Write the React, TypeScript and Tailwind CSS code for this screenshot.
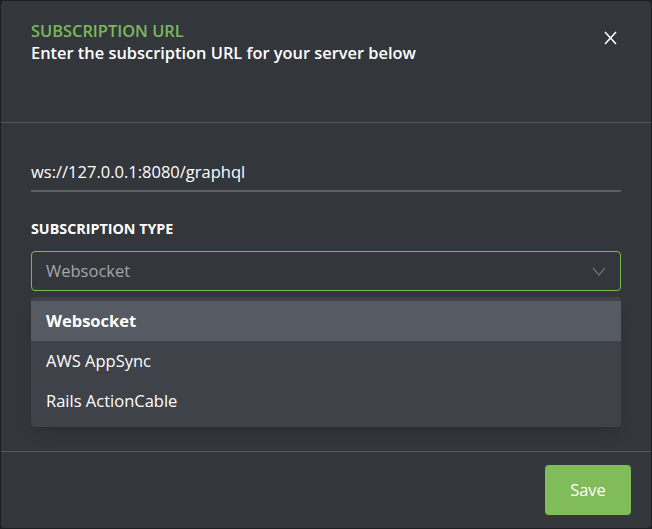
import { useState } from 'react';

const options = ['Websocket', 'AWS AppSync', 'Rails ActionCable'];

export default function App() {
  const [url, setUrl] = useState('ws://127.0.0.1:8080/graphql');
  const [selected] = useState('Websocket');

  return (
    <div
      className="w-[652px] h-[529px] bg-[#1d1f22] p-px"
      style={{ fontFamily: '"Open Sans", sans-serif' }}
    >
      <div className="h-full bg-[#33363b] rounded-[4px] flex flex-col">
        {/* header */}
        <div className="h-[122px] border-b border-[#55585d] px-[30px] pt-[19px] flex justify-between">
          <div>
            <div className="text-[#7ab95a] text-[16.4px] font-semibold leading-[22px]">SUBSCRIPTION URL</div>
            <div className="text-white text-[16.4px] font-semibold leading-[22px]">
              Enter the subscription URL for your server below
            </div>
          </div>
          <button className="text-white mt-[11px] mr-[4px] h-[14px]">
            <svg width="13" height="14" viewBox="0 0 13 14" fill="none" stroke="currentColor" strokeWidth="1.6">
              <path d="M1 1 L12 13 M12 1 L1 13" />
            </svg>
          </button>
        </div>

        {/* body */}
        <div className="flex-1 px-[30px] pt-[37px] border-b border-[#55585d]">
          <input
            value={url}
            onChange={(e) => setUrl(e.target.value)}
            className="w-full bg-transparent text-white text-[16.5px] pb-[5px] outline-none border-b-2 border-[#5b5e63]"
          />
          <div className="mt-[26px] text-white text-[14.3px] font-bold">SUBSCRIPTION TYPE</div>
          <div className="relative mt-[12px]">
            <div className="h-[40px] border border-[#77bb53] rounded-[4px] flex items-center justify-between pl-[14px] pr-[14px]">
              <span className="text-[#a3a6aa] text-[16.5px]">{selected}</span>
              <svg width="14" height="9" viewBox="0 0 14 9" fill="none" stroke="#6a6d72" strokeWidth="1.4">
                <path d="M1 1 L7 8 L13 1" />
              </svg>
            </div>
            <div className="absolute left-0 right-0 top-[46px] bg-[#3f4249] rounded-[4px] pt-[4px] pb-[6px] shadow-lg">
              {options.map((o) => (
                <div
                  key={o}
                  className={
                    o === selected
                      ? 'h-[40px] px-[15px] flex items-center bg-[#565b63] text-white font-bold text-[16.5px]'
                      : 'h-[40px] px-[15px] flex items-center text-white text-[16.5px]'
                  }
                >
                  {o}
                </div>
              ))}
            </div>
          </div>
        </div>

        {/* footer */}
        <div className="h-[76px] flex justify-end items-start pt-[13px] pr-[20px]">
          <button className="w-[86px] h-[50px] bg-[#80bc59] text-white text-[16.5px] rounded-[4px]">Save</button>
        </div>
      </div>
    </div>
  );
}
